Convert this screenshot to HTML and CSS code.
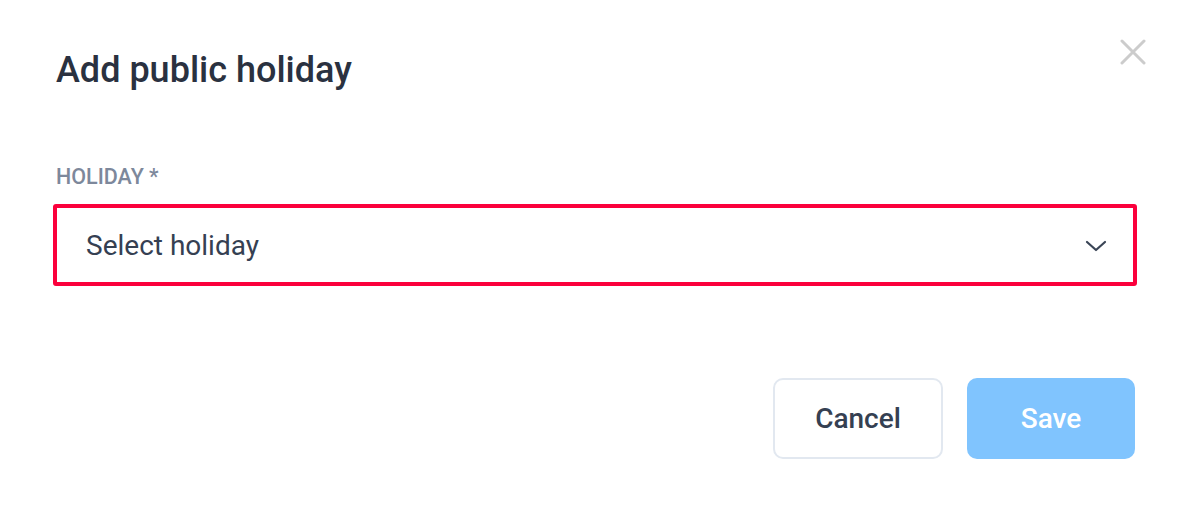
FILE: index.html
```html
<!DOCTYPE html>
<html>
<head>
<meta charset="utf-8">
<link rel="stylesheet" href="styles.css">
</head>
<body>
<div class="modal">
  <div class="header">
    <h1 class="title">Add public holiday</h1>
    <button class="close" aria-label="Close">
      <svg width="26" height="26" viewBox="0 0 26 26"><path d="M2 2 L24 24 M24 2 L2 24" stroke="#cccccc" stroke-width="3" stroke-linecap="round"/></svg>
    </button>
  </div>
  <div class="field">
    <label class="label">HOLIDAY *</label>
    <div class="select">
      <span class="placeholder">Select holiday</span>
      <svg class="chev" width="22" height="12" viewBox="0 0 22 12"><path d="M2 2 L11 10 L20 2" fill="none" stroke="#3a4556" stroke-width="2.2" stroke-linecap="round" stroke-linejoin="round"/></svg>
    </div>
  </div>
  <div class="actions">
    <button class="btn cancel">Cancel</button>
    <button class="btn save">Save</button>
  </div>
</div>
</body>
</html>
```
FILE: styles.css
```css
* { box-sizing: border-box; }
html, body { margin: 0; padding: 0; background: #fff; }
body { font-family: Roboto, "Liberation Sans", sans-serif; width: 1190px; height: 514px; overflow: hidden; }
.modal { padding: 0 53px 0 53px; }
.header { display: flex; justify-content: space-between; align-items: flex-start; padding-top: 47px; }
.title { margin: 0 0 0 3px; font-size: 36px; font-weight: 500; color: #2a3140; line-height: 46px; letter-spacing: 0; }
.close { background: none; border: 0; padding: 0; margin: -8px -9px 0 0; cursor: pointer; width: 26px; height: 26px; }
.close svg { display: block; }
.field { margin-top: 73px; }
.label { display: block; margin-left: 3px; font-size: 21.5px; font-weight: 500; color: #7d889b; line-height: 22px; letter-spacing: 0; }
.select { margin-top: 16px; height: 82px; border: 4px solid #fb003c; border-radius: 3px; display: flex; align-items: center; justify-content: space-between; padding: 0 26px 0 29px; }
.placeholder { font-size: 28px; color: #354052; }
.chev { display: block; margin-top: 2px; }
.actions { display: flex; justify-content: flex-end; gap: 24px; margin-top: 92px; padding-right: 2px; }
.btn { height: 81px; border-radius: 10px; font-family: Roboto, "Liberation Sans", sans-serif; font-size: 28px; font-weight: 500; cursor: pointer; }
.cancel { width: 170px; background: #fff; border: 2px solid #e2e8f0; color: #354052; }
.save { width: 168px; background: #80c4fe; border: 0; color: #fff; }
```
